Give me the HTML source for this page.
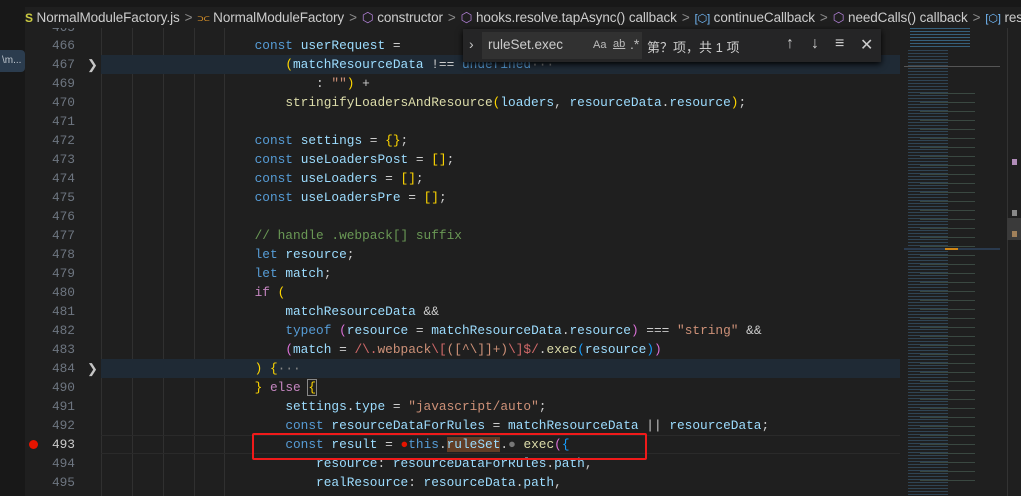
<!DOCTYPE html>
<html><head><meta charset="utf-8"><style>
*{margin:0;padding:0;box-sizing:border-box}
html,body{width:1021px;height:496px;overflow:hidden}
body{background:#1f1f1f;position:relative;font-family:"Liberation Mono",monospace}
.abs{position:absolute}
#top{left:0;top:0;width:1021px;height:7px;background:#181818}
#crumb{left:25px;top:7px;width:996px;height:21px;overflow:hidden;background:#1f1f1f;font-family:"Liberation Sans",sans-serif;font-size:13.5px;letter-spacing:-0.1px;color:#cccccc;white-space:nowrap;line-height:21px;z-index:3}
#crumb span.s{color:#8c8c8c;margin:0 5px}
#left{left:0;top:0;width:25px;height:496px;background:#181818;z-index:4}
#badge{left:0;top:50px;width:25px;height:22px;background:#2b3c4e;color:#c0c8d0;font-size:10px;line-height:22px;font-family:"Liberation Sans",sans-serif;border-radius:0 4px 4px 0;padding-left:2px;z-index:5}
.row{position:absolute;left:25px;width:875px;height:19px;line-height:19px;font-size:12.8px;white-space:pre}
.ln{position:absolute;left:0;width:50px;text-align:right;color:#6e7681}
.code{position:absolute;left:76px;color:#cccccc}
.hl{background:#1f2a35}
.k{color:#569cd6}.v{color:#9cdcfe}.f{color:#dcdcaa}.s2{color:#ce9178}.p{color:#c586c0}.c{color:#6a9955}.y{color:#ffd700}.m{color:#da70d6}.b{color:#179fff}.r{color:#d16969}.w{color:#d4d4d4}
.guide{position:absolute;top:28px;width:1px;height:468px;background:#303030}
.chev{position:absolute;left:62px;color:#c5c5c5;font-family:"Liberation Sans",sans-serif;font-size:13px}
#find{left:463px;top:29px;width:418px;height:33px;background:#252526;box-shadow:0 2px 6px #000;z-index:6;font-family:"Liberation Sans","Noto Sans CJK SC",sans-serif;color:#cccccc}
#mini{left:900px;top:28px;width:121px;height:468px;background:#1f1f1f;overflow:hidden}
</style></head><body>
<div id="top" class="abs"></div>
<div id="left" class="abs"></div>
<div id="badge" class="abs">\m...</div>
<div id="crumb" class="abs"><span style="color:#cbcb41;font-weight:bold;font-size:12px">S</span> NormalModuleFactory.js<span class="s">&gt;</span><span style="color:#ee9d28">&#x2AD7;</span> NormalModuleFactory<span class="s">&gt;</span><span style="color:#b180d7">&#x2B21;</span> constructor<span class="s">&gt;</span><span style="color:#b180d7">&#x2B21;</span> hooks.resolve.tapAsync() callback<span class="s">&gt;</span><span style="color:#75beff;font-size:11px">[&#x2B21;]</span> continueCallback<span class="s">&gt;</span><span style="color:#b180d7">&#x2B21;</span> needCalls() callback<span class="s">&gt;</span><span style="color:#75beff;font-size:11px">[&#x2B21;]</span> result</div>

<div class="guide" style="left:101px"></div><div class="guide" style="left:132px"></div><div class="guide" style="left:163px"></div><div class="guide" style="left:194px"></div><div class="guide" style="left:224px"></div>

<div class="row" style="top:18px"><span class="ln">465</span></div>
<div class="row hl" style="top:55px;left:101px;width:799px"></div>
<div class="row hl" style="top:359px;left:101px;width:799px"></div>
<div class="row" style="top:36px"><span class="ln">466</span><span class="code">                    <span class="k">const</span> <span class="v">userRequest</span> =</span></div>
<div class="row" style="top:55px"><span class="ln">467</span><span class="chev">&#x276F;</span><span class="code">                        <span class="y">(</span><span class="v">matchResourceData</span> !== <span class="k">undefined</span><span style="color:#888">···</span></span></div>
<div class="row" style="top:74px"><span class="ln">469</span><span class="code">                            : <span class="s2">""</span><span class="y">)</span> +</span></div>
<div class="row" style="top:93px"><span class="ln">470</span><span class="code">                        <span class="f">stringifyLoadersAndResource</span><span class="y">(</span><span class="v">loaders</span>, <span class="v">resourceData</span>.<span class="v">resource</span><span class="y">)</span>;</span></div>
<div class="row" style="top:112px"><span class="ln">471</span></div>
<div class="row" style="top:131px"><span class="ln">472</span><span class="code">                    <span class="k">const</span> <span class="v">settings</span> = <span class="y">{}</span>;</span></div>
<div class="row" style="top:150px"><span class="ln">473</span><span class="code">                    <span class="k">const</span> <span class="v">useLoadersPost</span> = <span class="y">[]</span>;</span></div>
<div class="row" style="top:169px"><span class="ln">474</span><span class="code">                    <span class="k">const</span> <span class="v">useLoaders</span> = <span class="y">[]</span>;</span></div>
<div class="row" style="top:188px"><span class="ln">475</span><span class="code">                    <span class="k">const</span> <span class="v">useLoadersPre</span> = <span class="y">[]</span>;</span></div>
<div class="row" style="top:207px"><span class="ln">476</span></div>
<div class="row" style="top:226px"><span class="ln">477</span><span class="code">                    <span class="c">// handle .webpack[] suffix</span></span></div>
<div class="row" style="top:245px"><span class="ln">478</span><span class="code">                    <span class="k">let</span> <span class="v">resource</span>;</span></div>
<div class="row" style="top:264px"><span class="ln">479</span><span class="code">                    <span class="k">let</span> <span class="v">match</span>;</span></div>
<div class="row" style="top:283px"><span class="ln">480</span><span class="code">                    <span class="p">if</span> <span class="y">(</span></span></div>
<div class="row" style="top:302px"><span class="ln">481</span><span class="code">                        <span class="v">matchResourceData</span> &amp;&amp;</span></div>
<div class="row" style="top:321px"><span class="ln">482</span><span class="code">                        <span class="k">typeof</span> <span class="m">(</span><span class="v">resource</span> = <span class="v">matchResourceData</span>.<span class="v">resource</span><span class="m">)</span> === <span class="s2">"string"</span> &amp;&amp;</span></div>
<div class="row" style="top:340px"><span class="ln">483</span><span class="code">                        <span class="m">(</span><span class="v">match</span> = <span class="r">/\.</span><span class="s2">webpack</span><span class="r">\[</span><span class="s2">([^\]]+)</span><span class="r">\]$/</span>.<span class="f">exec</span><span class="b">(</span><span class="v">resource</span><span class="b">)</span><span class="m">)</span></span></div>
<div class="row" style="top:359px"><span class="ln">484</span><span class="chev">&#x276F;</span><span class="code">                    <span class="y">)</span> <span class="y">{</span><span style="color:#888">···</span></span></div>
<div class="row" style="top:378px"><span class="ln">490</span><span class="code">                    <span class="y">}</span> <span class="p">else</span> <span class="y" style="outline:1px solid #888">{</span></span></div>
<div class="row" style="top:397px"><span class="ln">491</span><span class="code">                        <span class="v">settings</span>.<span class="v">type</span> = <span class="s2">"javascript/auto"</span>;</span></div>
<div class="row" style="top:416px"><span class="ln">492</span><span class="code">                        <span class="k">const</span> <span class="v">resourceDataForRules</span> = <span class="v">matchResourceData</span> || <span class="v">resourceData</span>;</span></div>
<div class="row" style="top:435px;border-top:1px solid #2a2a2a;border-bottom:1px solid #2a2a2a;left:101px;width:799px"></div>
<div class="row" style="top:435px"><span class="ln" style="color:#cccccc">493</span><span class="abs" style="left:4px;top:5px;width:9px;height:9px;border-radius:50%;background:#e51400"></span><span class="code">                        <span class="k">const</span> <span class="v">result</span> = <span style="color:#e51400">●</span><span class="k">this</span>.<span class="v" style="background:#613d26">ruleSet</span>.<span style="color:#777">●</span> <span class="f">exec</span><span class="m">(</span><span class="b">{</span></span></div>
<div class="row" style="top:454px"><span class="ln">494</span><span class="code">                            <span class="v">resource</span>: <span class="v">resourceDataForRules</span>.<span class="v">path</span>,</span></div>
<div class="row" style="top:473px;height:23px;overflow:hidden"><span class="ln">495</span><span class="code">                            <span class="v">realResource</span>: <span class="v">resourceData</span>.<span class="v">path</span>,</span></div>
<div class="abs" style="left:252px;top:433px;width:395px;height:27px;border:2px solid #f01a1a;border-radius:2px"></div>

<div id="find" class="abs">
 <span class="abs" style="left:6px;top:7px;font-size:14px;color:#c5c5c5">&#x203A;</span>
 <div class="abs" style="left:19px;top:3px;width:160px;height:27px;background:#313131"></div>
 <span class="abs" style="left:25px;top:8px;font-size:13.5px">ruleSet.exec</span>
 <span class="abs" style="left:130px;top:10px;font-size:11px;color:#bbb">Aa</span>
 <span class="abs" style="left:150px;top:9px;font-size:11px;color:#bbb;text-decoration:underline">ab</span>
 <span class="abs" style="left:167px;top:7px;font-size:14px;color:#bbb">.*</span>
 <span class="abs" style="left:184px;top:8px;font-size:13px">第？项，共 1 项</span>
 <span class="abs" style="left:323px;top:6px;font-size:16px">↑</span>
 <span class="abs" style="left:348px;top:6px;font-size:16px">↓</span>
 <span class="abs" style="left:372px;top:6px;font-size:16px">≡</span>
 <span class="abs" style="left:397px;top:6px;font-size:16px">✕</span>
</div>

<div id="mini" class="abs">
<div class="abs" style="left:10px;top:0;width:60px;height:20px;background:repeating-linear-gradient(#3b6f92 0 1px,transparent 1px 3px);opacity:.8"></div>
<div class="abs" style="left:8px;top:22px;width:40px;height:446px;background:repeating-linear-gradient(#3f6a8a 0 1px,transparent 1px 3px);opacity:.5"></div>
<div class="abs" style="left:20px;top:60px;width:55px;height:400px;background:repeating-linear-gradient(transparent 0 5px,#5a7a6a 5px 6px,transparent 6px 9px);opacity:.45"></div>
<div class="abs" style="left:4px;top:38px;width:96px;height:1px;background:#555"></div>
<div class="abs" style="left:4px;top:220px;width:96px;height:2px;background:#2a3a4e"></div>
<div class="abs" style="left:45px;top:220px;width:13px;height:2px;background:#d18616"></div>
<div class="abs" style="left:107px;top:0;width:1px;height:468px;background:#333"></div>
<div class="abs" style="left:107px;top:190px;width:14px;height:22px;background:#3a3a3a"></div>
<div class="abs" style="left:112px;top:131px;width:5px;height:6px;background:#b08cb8"></div>
<div class="abs" style="left:112px;top:182px;width:5px;height:6px;background:#888"></div>
<div class="abs" style="left:112px;top:203px;width:5px;height:6px;background:#a0805a"></div>
</div>
</body></html>
